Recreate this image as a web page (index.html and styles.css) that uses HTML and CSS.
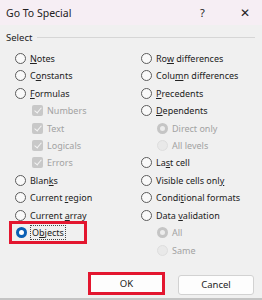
FILE: index.html
```html
<!DOCTYPE html>
<html lang="en">
<head>
  <meta charset="UTF-8">
  <meta name="viewport" content="width=device-width, initial-scale=1.0">
  <title>Go To Special</title>
  <link rel="stylesheet" href="styles.css">
</head>
<body>
  <div class="dialog">
    <header class="titlebar">
      <span class="title">Go To Special</span>
      <span class="help">?</span>
      <span class="close">✕</span>
    </header>

    <div class="group-head">
      <span>Select</span>
      <div class="rule"></div>
    </div>

    <div class="options">
      <div class="col">
        <div class="row"><span class="radio"></span><span><u>N</u>otes</span></div>
        <div class="row"><span class="radio"></span><span>C<u>o</u>nstants</span></div>
        <div class="row"><span class="radio"></span><span><u>F</u>ormulas</span></div>
        <div class="row sub off"><span class="check"></span><span>Numbers</span></div>
        <div class="row sub off"><span class="check"></span><span>Text</span></div>
        <div class="row sub off"><span class="check"></span><span>Logicals</span></div>
        <div class="row sub off"><span class="check"></span><span>Errors</span></div>
        <div class="row"><span class="radio"></span><span>Blan<u>k</u>s</span></div>
        <div class="row"><span class="radio"></span><span>Current <u>r</u>egion</span></div>
        <div class="row"><span class="radio"></span><span>Current <u>a</u>rray</span></div>
        <div class="row picked"><span class="radio on"></span><span class="focus">O<u>b</u>jects</span></div>
      </div>
      <div class="col">
        <div class="row"><span class="radio"></span><span>Ro<u>w</u> differences</span></div>
        <div class="row"><span class="radio"></span><span>Colu<u>m</u>n differences</span></div>
        <div class="row"><span class="radio"></span><span><u>P</u>recedents</span></div>
        <div class="row"><span class="radio"></span><span><u>D</u>ependents</span></div>
        <div class="row sub off"><span class="radio dim-on"></span><span>Direct only</span></div>
        <div class="row sub off"><span class="radio dim"></span><span>All levels</span></div>
        <div class="row"><span class="radio"></span><span>La<u>s</u>t cell</span></div>
        <div class="row"><span class="radio"></span><span>Visible cells onl<u>y</u></span></div>
        <div class="row"><span class="radio"></span><span>Condi<u>t</u>ional formats</span></div>
        <div class="row"><span class="radio"></span><span>Data <u>v</u>alidation</span></div>
        <div class="row sub off"><span class="radio dim-on"></span><span>All</span></div>
        <div class="row sub off"><span class="radio dim"></span><span>Same</span></div>
      </div>
    </div>

    <div class="buttons">
      <button class="btn btn-ok">OK</button>
      <button class="btn">Cancel</button>
    </div>
  </div>
</body>
</html>
```

FILE: styles.css
```css
body {
  margin: 0;
  font-family: "Noto Sans", sans-serif;
  background-color: #f0f0f0;
  color: #222;
}
.dialog {
  width: 262px;
  height: 300px;
  box-sizing: border-box;
  border-bottom: 2px solid #c4c4c4;
  background-color: #f0f0f0;
  overflow: hidden;
}
.titlebar {
  display: flex;
  align-items: center;
  height: 25px;
  padding: 0 0 0 6px;
  background-color: #f6eef4;
  font-size: 10.5px;
}
.title {
  flex: 1;
}
.help {
  width: 10px;
  margin-right: 30px;
  font-size: 11px;
}
.close {
  width: 22px;
  font-size: 12px;
}
.group-head {
  display: flex;
  align-items: center;
  height: 24.6px;
  padding: 0 7px 0 6px;
  font-size: 9.5px;
}
.rule {
  flex: 1;
  height: 1px;
  margin-left: 5px;
  background-color: #d6d6d6;
}
.options {
  display: grid;
  grid-template-columns: 126px 1fr;
  padding-left: 15px;
  font-size: 9px;
}
.row {
  display: flex;
  align-items: center;
  gap: 4px;
  height: 17.45px;
  white-space: nowrap;
}
.row.sub {
  padding-left: 17px;
}
.col:last-child .row.sub {
  padding-left: 16px;
}
.off {
  color: #a2a2a2;
}
.radio {
  width: 11px;
  height: 11px;
  box-sizing: border-box;
  border: 1px solid #5c5c5c;
  border-radius: 50%;
  background-color: #f9f9f9;
  flex-shrink: 0;
}
.radio.on {
  border: 3px solid #0a5fb4;
  background-color: #fff;
}
.radio.dim-on {
  border: 3px solid #c5c5c5;
  background-color: #ececec;
}
.radio.dim {
  border: 1px solid #dedede;
  background-color: #e9e9e9;
}
.check {
  position: relative;
  width: 11px;
  height: 11px;
  border-radius: 2px;
  background-color: #c8c8c8;
  flex-shrink: 0;
}
.check::after {
  content: "";
  position: absolute;
  left: 3.5px;
  top: 1px;
  width: 3px;
  height: 6px;
  border: solid #f4f4f4;
  border-width: 0 1.5px 1.5px 0;
  transform: rotate(40deg);
}
.picked {
  margin-left: -6px;
  padding-left: 4px;
  width: 68px;
  height: 17px;
  border: 3px solid #e3162f;
  margin-top: -3px;
}
.focus {
  outline: 1px dotted #444;
  padding: 0 1px;
}
.buttons {
  display: flex;
  justify-content: flex-end;
  align-items: flex-end;
  gap: 13px;
  padding: 13px 8px 0 0;
}
.btn {
  width: 76px;
  height: 20px;
  border: 1px solid #d2d2d2;
  border-radius: 3px;
  background-color: #fdfdfd;
  font-family: inherit;
  font-size: 9.5px;
  color: #222;
  padding: 0;
}
.btn-ok {
  border: 3px solid #e3162f;
  border-radius: 0;
  width: 77px;
  height: 23px;
}
```
